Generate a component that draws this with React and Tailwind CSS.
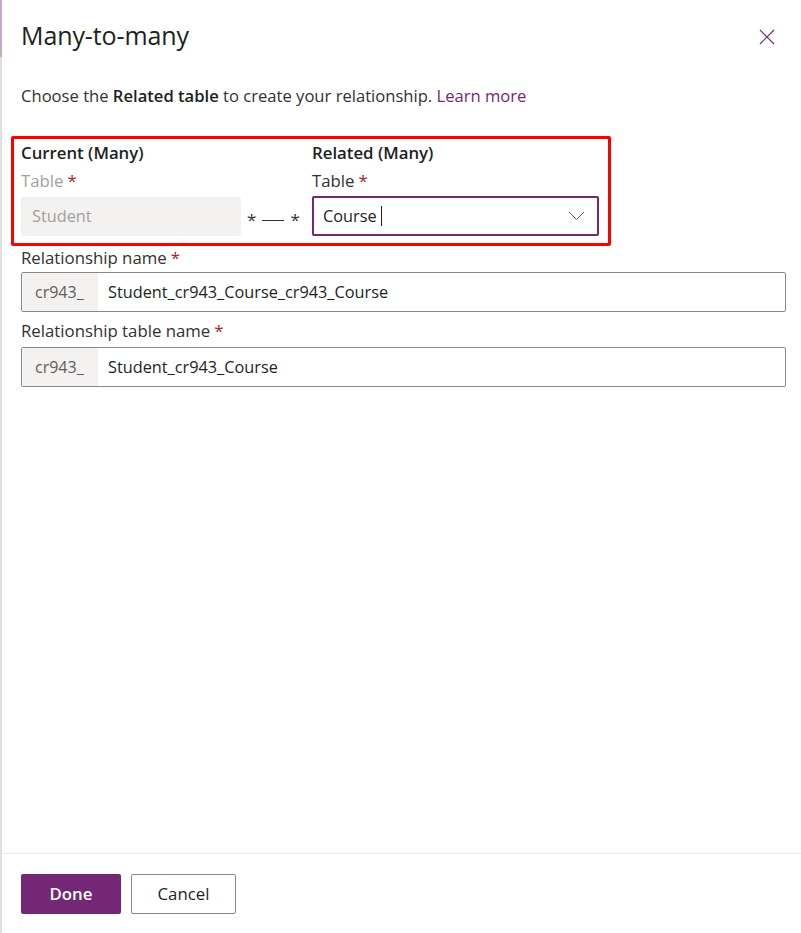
import React from 'react';

const font = { fontFamily: '"Open Sans", "Noto Sans", sans-serif' };

function Req() {
  return <span className="text-[#a4262c] ml-1">*</span>;
}

function PrefixInput({ prefix, value }) {
  return (
    <div className="flex h-[40px] border border-[#8a8886] rounded-[2px] overflow-hidden">
      <div className="flex items-center px-[13px] bg-[#f3f2f1] text-[#605e5c] text-[16px] w-[76px] shrink-0">
        {prefix}
      </div>
      <div className="flex items-center px-[10px] text-[#201f1e] text-[16.3px]">{value}</div>
    </div>
  );
}

export default function App() {
  return (
    <div className="w-[801px] h-[933px] bg-white flex flex-col relative text-[#323130]" style={font}>
      {/* left edge strip */}
      <div className="absolute left-0 top-0 w-[2px] h-[57px] bg-[#c7a7c7]" />
      <div className="absolute left-0 top-[57px] w-[2px] bottom-0 bg-[#e1dfdd]" />

      {/* Header */}
      <div className="flex items-center justify-between pl-[21px] pr-[26px] pt-[16px] h-[56px]">
        <h1 className="text-[25px] font-normal tracking-[-0.1px] text-[#201f1e]">Many-to-many</h1>
        <button className="text-[#742774] mt-[2px]">
          <svg width="16" height="16" viewBox="0 0 16 16">
            <path d="M1 1L15 15M15 1L1 15" stroke="currentColor" strokeWidth="1.1" />
          </svg>
        </button>
      </div>

      {/* Content */}
      <div className="flex-1 pl-[21px] pr-[15px]">
        <p className="text-[16.6px] mt-[28px]">
          Choose the <span className="font-semibold text-[#201f1e]">Related table</span> to create your relationship.{' '}
          <span className="text-[#742774]">Learn more</span>
        </p>

        <div className="mt-[27px] -ml-[10px] w-[600px] h-[110px] border-[3px] border-[#ff0000] rounded-[2px] pl-[7px] pt-[1px] flex">
          <div className="w-[220px]">
            <div className="text-[16.8px] font-semibold text-[#201f1e] h-[26px] leading-[26px]">Current (Many)</div>
            <div className="text-[16.8px] text-[#a19f9d] h-[30px] leading-[30px]">
              Table<Req />
            </div>
            <div className="h-[39px] bg-[#f3f2f1] rounded-[2px] flex items-center px-[11px] text-[16.3px] text-[#a19f9d] mt-[1px]">
              Student
            </div>
          </div>
          <div className="w-[71px] flex items-end pb-[10px] pl-[6px] text-[17px] text-[#323130] gap-[6px]">
            <span>*</span>
            <span className="w-[22px] h-[1px] bg-[#323130] mb-[12px]" />
            <span>*</span>
          </div>
          <div className="w-[287px]">
            <div className="text-[16.8px] font-semibold text-[#201f1e] h-[26px] leading-[26px]">Related (Many)</div>
            <div className="text-[16.8px] text-[#323130] h-[30px] leading-[30px]">
              Table<Req />
            </div>
            <div className="h-[40px] border-2 border-[#742774] rounded-[2px] flex items-center justify-between pl-[9px] pr-[12px]">
              <span className="text-[16.3px] text-[#201f1e] flex items-center">
                Course<span className="inline-block w-[1px] h-[20px] bg-[#201f1e] ml-[4px]" />
              </span>
              <svg width="17" height="10" viewBox="0 0 17 10">
                <path d="M1 1L8.5 8.5L16 1" stroke="#605e5c" strokeWidth="1" fill="none" />
              </svg>
            </div>
          </div>
        </div>

        <div className="text-[16.8px] text-[#323130] -mt-[2px] h-[27px] leading-[27px]">
          Relationship name<Req />
        </div>
        <div className="mt-[1px]">
          <PrefixInput prefix="cr943_" value="Student_cr943_Course_cr943_Course" />
        </div>
        <div className="text-[16.8px] text-[#323130] mt-[3px] h-[32px] leading-[32px]">
          Relationship table name<Req />
        </div>
        <PrefixInput prefix="cr943_" value="Student_cr943_Course" />
      </div>

      {/* Footer */}
      <div className="border-t border-[#edebe9] h-[80px] flex items-start gap-[10px] pl-[21px] pt-[20px]">
        <button className="w-[100px] h-[40px] bg-[#742774] text-white font-semibold text-[16.8px] rounded-[2px]">
          Done
        </button>
        <button className="w-[105px] h-[40px] bg-white border border-[#8a8886] text-[#201f1e] text-[16.8px] rounded-[2px]">
          Cancel
        </button>
      </div>
    </div>
  );
}
